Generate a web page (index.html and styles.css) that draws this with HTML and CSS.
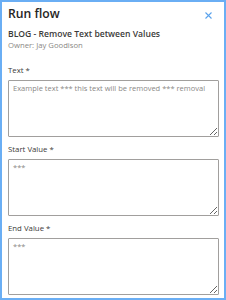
FILE: index.html
```html
<!DOCTYPE html>
<html lang="en">
<head>
  <meta charset="UTF-8">
  <meta name="viewport" content="width=device-width, initial-scale=1.0">
  <title>Run flow</title>
  <link rel="stylesheet" href="styles.css">
</head>
<body>
  <div class="panel">
    <div class="header">
      <h1 class="title">Run flow</h1>
      <button class="close" aria-label="Close">
        <svg width="7" height="7" viewBox="0 0 7 7">
          <path d="M0.5 0.5 L6.5 6.5 M6.5 0.5 L0.5 6.5" stroke="#5aa2ec" stroke-width="1.1" fill="none"/>
        </svg>
      </button>
    </div>
    <div class="flow-name">BLOG - Remove Text between Values</div>
    <div class="owner">Owner: Jay Goodison</div>

    <div class="fields">
      <div class="field">
        <label class="label">Text *</label>
        <textarea class="input">Example text *** this text will be removed *** removal</textarea>
      </div>
      <div class="field">
        <label class="label">Start Value *</label>
        <textarea class="input">***</textarea>
      </div>
      <div class="field">
        <label class="label">End Value *</label>
        <textarea class="input">***</textarea>
      </div>
    </div>
  </div>
</body>
</html>
```

FILE: styles.css
```css
* {
  margin: 0;
  padding: 0;
  box-sizing: border-box;
  font-family: 'Open Sans', 'Noto Sans', sans-serif;
}

body {
  background: #fff;
}

.panel {
  width: 226px;
  height: 300px;
  border: 2px solid #6aaef4;
  padding: 4px 6px 0 6px;
  color: #323130;
}

.header {
  display: flex;
  justify-content: space-between;
  align-items: center;
  height: 16px;
}

.title {
  font-size: 12.2px;
  line-height: 16px;
  font-weight: 600;
  color: #252423;
}

.close {
  background: none;
  border: none;
  width: 7px;
  height: 7px;
  margin-right: 6px;
  margin-top: 3px;
  display: flex;
}

.flow-name {
  margin-top: 6px;
  font-size: 8.6px;
  line-height: 12px;
  font-weight: 600;
  color: #3b3a39;
}

.owner {
  font-size: 7.7px;
  line-height: 11px;
  color: #8a8886;
}

.fields {
  display: flex;
  flex-direction: column;
  gap: 7px;
  margin-top: 14px;
}

.field {
  display: flex;
  flex-direction: column;
}

.label {
  font-size: 7.8px;
  line-height: 11px;
  font-weight: 500;
  color: #3b3a39;
  margin-bottom: 4px;
}

.input {
  width: 211px;
  height: 57px;
  border: 1px solid #a19f9d;
  border-radius: 1px;
  padding: 2px 4px;
  font-size: 7.5px;
  line-height: 11px;
  color: #8a8886;
  background: #fff;
  resize: vertical;
  outline: none;
}
```
